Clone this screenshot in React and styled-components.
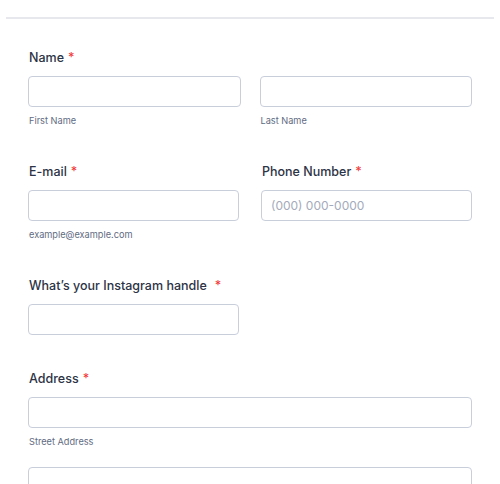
import React from "react";
import styled, { createGlobalStyle } from "styled-components";

const Global = createGlobalStyle`
  html, body { margin: 0; padding: 0; background: #ffffff; }
  body { font-family: Inter, "Noto Sans", sans-serif; -webkit-font-smoothing: antialiased; }
  * { box-sizing: border-box; }
`;

const Page = styled.div`
  width: 500px;
  height: 484px;
  overflow: hidden;
  background: #fff;
`;

const Divider = styled.div`
  margin: 17px 6px 0;
  height: 2px;
  background: #e6e8ee;
`;

const Form = styled.div`
  display: flex;
  flex-direction: column;
  gap: 34px;
  padding: 29px 28px 0 28px;
`;

const Field = styled.div`
  display: flex;
  flex-direction: column;
`;

const Label = styled.div`
  font-size: 12.5px;
  font-weight: 500;
  line-height: 20px;
  color: #2c3345;
  margin-bottom: 8px;
  padding-left: 1px;
`;

const Req = styled.span`
  color: #f23a3c;
  margin-left: ${(p) => p.$gap || 4}px;
`;

const Row = styled.div`
  display: grid;
  grid-template-columns: 1fr 1fr;
  column-gap: ${(p) => p.$gap}px;
`;

const Col = styled.div`
  display: flex;
  flex-direction: column;
  width: ${(p) => (p.$width ? `${p.$width}px` : "auto")};
`;

const Input = styled.input`
  display: block;
  width: 100%;
  height: 31px;
  border: 1px solid #c9cedb;
  border-radius: 4px;
  background: #fff;
  padding: 0 9px;
  font-family: Inter, "Noto Sans", sans-serif;
  font-size: 12px;
  color: #2c3345;
  outline: none;
  &::placeholder { color: #a4aabb; }
`;

const Sub = styled.div`
  font-size: 9.2px;
  line-height: 14px;
  color: #5f6b82;
  margin-top: 7px;
  padding-left: 1px;
`;

const Stack = styled.div`
  display: flex;
  flex-direction: column;
  gap: 18px;
`;

export default function App() {
  return (
    <Page>
      <Global />
      <Divider />
      <Form>
        <Field>
          <Label>Name<Req>*</Req></Label>
          <Row $gap={19}>
            <Col>
              <Input />
              <Sub>First Name</Sub>
            </Col>
            <Col>
              <Input />
              <Sub>Last Name</Sub>
            </Col>
          </Row>
        </Field>
        <Row $gap={22}>
          <Field>
            <Label>E-mail<Req>*</Req></Label>
            <Input />
            <Sub>example@example.com</Sub>
          </Field>
          <Field>
            <Label>Phone Number<Req>*</Req></Label>
            <Input placeholder="(000) 000-0000" />
          </Field>
        </Row>
        <Field>
          <Label>What’s your Instagram handle<Req $gap={8}>*</Req></Label>
          <Col $width={211}>
            <Input />
          </Col>
        </Field>
        <Field>
          <Label>Address<Req>*</Req></Label>
          <Stack>
            <Col>
              <Input />
              <Sub>Street Address</Sub>
            </Col>
            <Col>
              <Input />
            </Col>
          </Stack>
        </Field>
      </Form>
    </Page>
  );
}
